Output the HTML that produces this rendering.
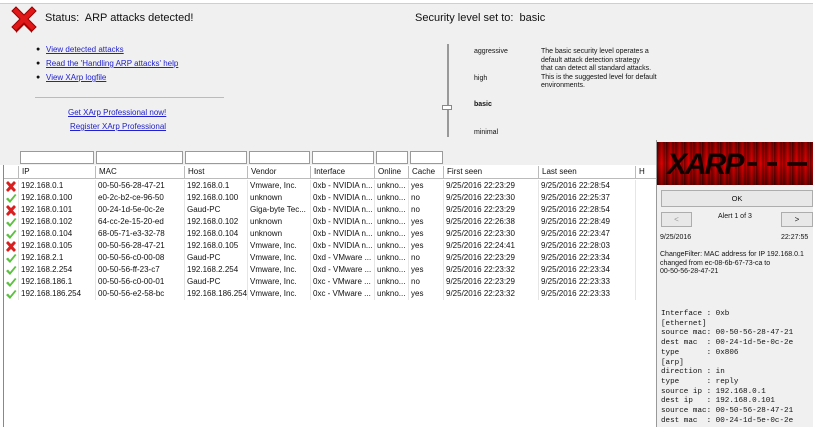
<!DOCTYPE html>
<html><head><meta charset="utf-8"><style>
*{margin:0;padding:0;box-sizing:border-box}
body{width:813px;height:427px;overflow:hidden;background:#fff;font-family:"Liberation Sans",sans-serif;font-size:8px;color:#111;position:relative}
.a{position:absolute;white-space:nowrap}
a{color:#2222cc;text-decoration:underline}
.top{position:absolute;left:0;top:3px;width:813px;height:146px;background:#f0f0f0;border-top:1px solid #c8d0e0}
.fi{position:absolute;top:151px;height:13px;background:#fff;border:1px solid #9a9a9a}
.hd{position:absolute;top:166px;height:13px;border-right:1px solid #bbb;border-bottom:1px solid #bbb;background:#fff;padding-left:3px;line-height:12px}
.c{position:absolute;top:0;line-height:12px;border-right:1px solid #e6e6e6;height:12px;padding-left:2px;overflow:hidden}
.mono{font-family:"Liberation Mono",monospace;font-size:7.6px;line-height:9.7px;white-space:pre}
.btn{position:absolute;background:#e8e8e8;border:1px solid #adadad;text-align:center}
</style></head><body>
<div class="top">
<svg class="a" style="left:8px;top:0px" width="32" height="32" viewBox="0 0 32 32"><path d="M4 7 L8 3 L16 11 L24 3 L28 7 L20 15 L28 23 L24 27 L16 19 L8 27 L4 23 L12 15Z" fill="#e01818" stroke="#900" stroke-width="1"/><path d="M8 27 L16 19 L24 27 L24 29 L16 21 L8 29Z" fill="#a00"/></svg>
<div class="a" style="left:45px;top:8px;font-size:11px">Status:&nbsp; ARP attacks detected!</div>
<div class="a" style="left:415px;top:8px;font-size:11px">Security level set to:&nbsp; basic</div>
<div class="a" style="left:36px;top:42px;font-size:7px">●</div><div class="a" style="left:46px;top:41px"><a>View detected attacks</a></div>
<div class="a" style="left:36px;top:56px;font-size:7px">●</div><div class="a" style="left:46px;top:55px"><a>Read the 'Handling ARP attacks' help</a></div>
<div class="a" style="left:36px;top:70px;font-size:7px">●</div><div class="a" style="left:46px;top:69px"><a>View XArp logfile</a></div>
<div class="a" style="left:35px;top:93px;width:189px;border-top:1px solid #bbb"></div>
<div class="a" style="left:68px;top:104px"><a>Get XArp Professional now!</a></div>
<div class="a" style="left:70px;top:118px"><a>Register XArp Professional</a></div>
<div class="a" style="left:447px;top:40px;width:2px;height:93px;background:#999"></div>
<div class="a" style="left:442px;top:101px;width:10px;height:5px;background:#fff;border:1px solid #888"></div>
<div class="a" style="left:474px;top:44px;font-size:7px">aggressive</div>
<div class="a" style="left:474px;top:71px;font-size:7px">high</div>
<div class="a" style="left:474px;top:97px;font-size:7px;font-weight:bold">basic</div>
<div class="a" style="left:474px;top:125px;font-size:7px">minimal</div>
<div class="a" style="left:541px;top:44px;font-size:7px;line-height:8.5px">The basic security level operates a<br>default attack detection strategy<br>that can detect all standard attacks.<br>This is the suggested level for default<br>environments.</div>
</div>
<div class="a" style="left:0;top:149px;width:813px;height:16px;background:#f0f0f0"></div>
<div class="fi" style="left:20px;width:74px"></div><div class="fi" style="left:96px;width:87px"></div><div class="fi" style="left:185px;width:62px"></div><div class="fi" style="left:249px;width:61px"></div><div class="fi" style="left:312px;width:62px"></div><div class="fi" style="left:376px;width:32px"></div><div class="fi" style="left:410px;width:33px"></div>
<div class="a" style="left:3px;top:165px;width:1px;height:262px;background:#888"></div>
<div class="hd" style="left:4px;width:15px"></div>
<div class="hd" style="left:19px;width:77px">IP</div>
<div class="hd" style="left:96px;width:89px">MAC</div>
<div class="hd" style="left:185px;width:63px">Host</div>
<div class="hd" style="left:248px;width:63px">Vendor</div>
<div class="hd" style="left:311px;width:64px">Interface</div>
<div class="hd" style="left:375px;width:34px">Online</div>
<div class="hd" style="left:409px;width:35px">Cache</div>
<div class="hd" style="left:444px;width:95px">First seen</div>
<div class="hd" style="left:539px;width:97px">Last seen</div>
<div class="hd" style="left:636px;width:30px">H</div>
<div id="rows"></div>
<script>
var d=[["x","192.168.0.1","00-50-56-28-47-21","192.168.0.1","Vmware, Inc.","0xb - NVIDIA n...","yes","22:23:29","22:28:54"],
["v","192.168.0.100","e0-2c-b2-ce-96-50","192.168.0.100","unknown","0xb - NVIDIA n...","no","22:23:30","22:25:37"],
["x","192.168.0.101","00-24-1d-5e-0c-2e","Gaud-PC","Giga-byte Tec...","0xb - NVIDIA n...","no","22:23:29","22:28:54"],
["v","192.168.0.102","64-cc-2e-15-20-ed","192.168.0.102","unknown","0xb - NVIDIA n...","yes","22:26:38","22:28:49"],
["v","192.168.0.104","68-05-71-e3-32-78","192.168.0.104","unknown","0xb - NVIDIA n...","yes","22:23:30","22:23:47"],
["x","192.168.0.105","00-50-56-28-47-21","192.168.0.105","Vmware, Inc.","0xb - NVIDIA n...","yes","22:24:41","22:28:03"],
["v","192.168.2.1","00-50-56-c0-00-08","Gaud-PC","Vmware, Inc.","0xd - VMware ...","no","22:23:29","22:23:34"],
["v","192.168.2.254","00-50-56-ff-23-c7","192.168.2.254","Vmware, Inc.","0xd - VMware ...","yes","22:23:32","22:23:34"],
["v","192.168.186.1","00-50-56-c0-00-01","Gaud-PC","Vmware, Inc.","0xc - VMware ...","no","22:23:29","22:23:33"],
["v","192.168.186.254","00-50-56-e2-58-bc","192.168.186.254","Vmware, Inc.","0xc - VMware ...","yes","22:23:32","22:23:33"]];
var X=[[4,15],[19,77],[96,89],[185,63],[248,63],[311,64],[375,34],[409,35],[444,95],[539,97]];
var h="";d.forEach(function(r,i){var t=180+i*12;h+='<div class="a" style="left:4px;top:'+t+'px;width:650px;height:12px">';
var ic=r[0]=="x"?'<svg width="12" height="11" viewBox="0 0 12 11" style="display:block;margin-top:1px"><path d="M1 2L3 0L6 3L9 0L11 2L8 5.5L11 9L9 11L6 8L3 11L1 9L4 5.5Z" fill="#d82020"/></svg>':'<svg width="12" height="11" viewBox="0 0 12 11" style="display:block;margin-top:1px"><path d="M1 6L3 4.5L5 7L10 1L11.5 2L5 10Z" fill="#5cc040"/></svg>';
var v=[ic,r[1],r[2],r[3],r[4],r[5],"unkno...",r[6],"9/25/2016 "+r[7],"9/25/2016 "+r[8]];
for(var j=0;j<10;j++){h+='<div class="c" style="left:'+(X[j][0]-4)+'px;width:'+X[j][1]+'px;'+(j==0?'padding-left:1px;':'')+'">'+v[j]+'</div>';}
h+='</div>';});document.getElementById("rows").innerHTML=h;
</script>
<div class="a" style="left:656px;top:140px;width:157px;height:287px;background:#f0f0f0;border-left:1px solid #999"></div>
<div class="a" style="left:657px;top:142px;width:156px;height:43px;background:repeating-linear-gradient(90deg,#500 0px,#b00 3px,#e00 5px,#700 7px,#c00 9px);overflow:hidden">
<div class="a" style="left:0;top:0;width:156px;height:43px;background:linear-gradient(180deg,rgba(0,0,0,.3),rgba(200,0,0,.2) 50%,rgba(0,0,0,.4))"></div>
<div class="a" style="left:10px;top:6px;font-size:30px;font-weight:bold;font-style:italic;color:#120000;letter-spacing:-2px">XARP</div>
<div class="a" style="left:90px;top:20px;width:10px;height:4px;background:#200"></div>
<div class="a" style="left:110px;top:20px;width:10px;height:4px;background:#200"></div>
<div class="a" style="left:130px;top:20px;width:20px;height:4px;background:#200"></div>
</div>
<div class="btn" style="left:661px;top:190px;width:152px;height:17px;line-height:15px;font-size:7.5px">OK</div>
<div class="btn" style="left:661px;top:212px;width:31px;height:15px;line-height:13px;color:#999">&lt;</div>
<div class="btn" style="left:781px;top:212px;width:32px;height:15px;line-height:13px">&gt;</div>
<div class="a" style="left:718px;top:213px;font-size:7px">Alert 1 of 3</div>
<div class="a" style="left:660px;top:234px;font-size:7px">9/25/2016</div>
<div class="a" style="left:781px;top:234px;font-size:7px">22:27:55</div>
<div class="a" style="left:660px;top:251px;font-size:7px;line-height:8.5px">ChangeFilter: MAC address for IP 192.168.0.1<br>changed from ec-08-6b-67-73-ca to<br>00-50-56-28-47-21</div>
<div class="a mono" style="left:661px;top:310px">Interface : 0xb
[ethernet]
source mac: 00-50-56-28-47-21
dest mac  : 00-24-1d-5e-0c-2e
type      : 0x806
[arp]
direction : in
type      : reply
source ip : 192.168.0.1
dest ip   : 192.168.0.101
source mac: 00-50-56-28-47-21
dest mac  : 00-24-1d-5e-0c-2e</div>
</body></html>
